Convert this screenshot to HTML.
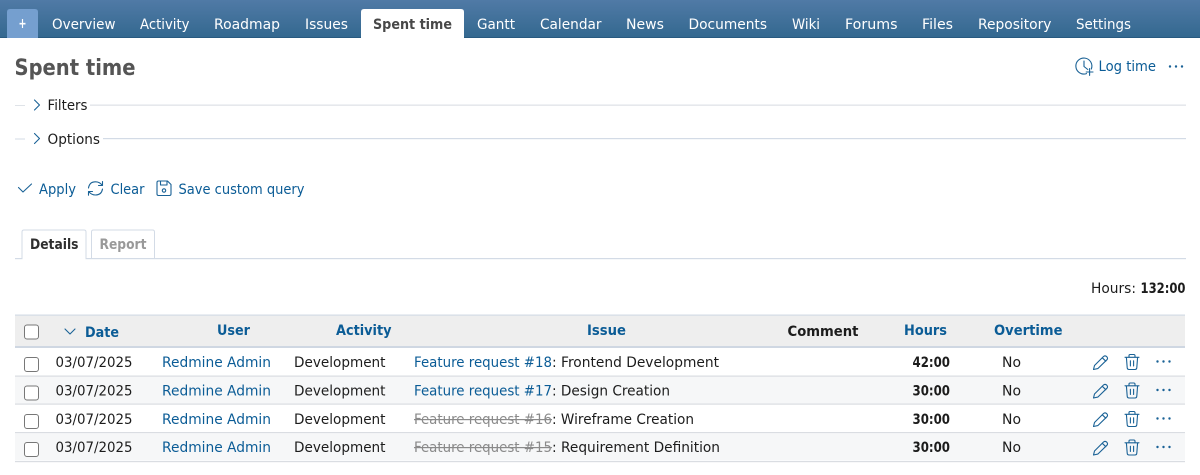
<!DOCTYPE html>
<html lang="en"><head><meta charset="utf-8"><title>Spent time</title>
<style>
html,body{margin:0;padding:0;background:#fff;width:1200px;height:475px;overflow:hidden}
svg{display:block}
text{font-family:"DejaVu Sans","Liberation Sans",Arial,sans-serif;font-size:14px;fill:#1c1c1c}
.n{fill:#fff}
.l{fill:#0b5c96}
.b{font-weight:700}
.h{fill:#0b5c96;font-weight:700}
.g{fill:#8a8a8a}
.i{fill:none;stroke:#1a6296;stroke-width:1.1;stroke-linecap:round;stroke-linejoin:round}
.c{fill:#fff;stroke:#777;stroke-width:1}
.d{fill:#1a6296}
</style></head><body>
<svg width="1200" height="475" viewBox="0 0 1200 475" xmlns="http://www.w3.org/2000/svg">
<defs>
<linearGradient id="nav" x1="0" y1="0" x2="0" y2="1"><stop offset="0" stop-color="#507aa6"/><stop offset="1" stop-color="#33688f"/></linearGradient>
<g id="pen"><path class="i" d="M1.5 15.5 L2.5 11.5 L11.5 2.5 Q13 1.2 14.7 2.6 Q16.2 4.2 15 5.7 L5.8 14.6 Z M10.3 3.8 L13.8 7.2"/></g>
<g id="bin"><path class="i" d="M1 3.8 H15 M5 3.8 V2.2 Q5 1 6.2 1 H9.8 Q11 1 11 2.2 V3.8 M2.4 3.8 L3.2 14.2 Q3.4 16 5 16 H11 Q12.6 16 12.8 14.2 L13.6 3.8 M6.4 7.3 V12.5 M9.6 7.3 V12.5"/></g>
<g id="dots"><circle class="d" cx="1.5" cy="1.5" r="1.2"/><circle class="d" cx="7.5" cy="1.5" r="1.2"/><circle class="d" cx="13.5" cy="1.5" r="1.2"/></g>
</defs>
<!-- nav -->
<rect width="1200" height="38" fill="url(#nav)"/>
<rect y="37" width="1200" height="1" fill="#285a80"/>
<path d="M7 38 V12 Q7 9 10 9 H35 Q38 9 38 12 V38 Z" fill="#759fcf"/>
<text class="n b" x="18.5" y="28" textLength="8" lengthAdjust="spacingAndGlyphs">+</text>
<path d="M361 38 V12 Q361 9 364 9 H461 Q464 9 464 12 V38 Z" fill="#fff"/>
<g>
<text class="n" x="52" y="29" textLength="63.5" lengthAdjust="spacingAndGlyphs">Overview</text>
<text class="n" x="140" y="29" textLength="49.5" lengthAdjust="spacingAndGlyphs">Activity</text>
<text class="n" x="214" y="29" textLength="66" lengthAdjust="spacingAndGlyphs">Roadmap</text>
<text class="n" x="305" y="29" textLength="43" lengthAdjust="spacingAndGlyphs">Issues</text>
<text class="b" x="373" y="29" textLength="79" lengthAdjust="spacingAndGlyphs" style="fill:#484848">Spent time</text>
<text class="n" x="477" y="29" textLength="38" lengthAdjust="spacingAndGlyphs">Gantt</text>
<text class="n" x="540" y="29" textLength="61.5" lengthAdjust="spacingAndGlyphs">Calendar</text>
<text class="n" x="626" y="29" textLength="38" lengthAdjust="spacingAndGlyphs">News</text>
<text class="n" x="688.5" y="29" textLength="78.5" lengthAdjust="spacingAndGlyphs">Documents</text>
<text class="n" x="792" y="29" textLength="28" lengthAdjust="spacingAndGlyphs">Wiki</text>
<text class="n" x="845" y="29" textLength="52.5" lengthAdjust="spacingAndGlyphs">Forums</text>
<text class="n" x="922" y="29" textLength="31" lengthAdjust="spacingAndGlyphs">Files</text>
<text class="n" x="978" y="29" textLength="73.5" lengthAdjust="spacingAndGlyphs">Repository</text>
<text class="n" x="1076" y="29" textLength="55" lengthAdjust="spacingAndGlyphs">Settings</text>
</g>
<!-- heading -->
<text class="b" x="14.5" y="75" textLength="121" lengthAdjust="spacingAndGlyphs" style="font-size:22.5px;fill:#555">Spent time</text>
<path class="i" d="M1091.3 69 A8 8 0 1 0 1086.5 73.6"/>
<path class="i" d="M1084 61 V66.5 L1087.8 69.5"/>
<path class="i" d="M1086.2 72 H1093 M1089.6 68.6 V75.4"/>
<text class="l" x="1098.5" y="71" textLength="57.5" lengthAdjust="spacingAndGlyphs">Log time</text>
<use href="#dots" x="1168.5" y="65"/>
<!-- fieldsets -->
<rect x="15" y="105" width="10" height="1" fill="#dfe3e8"/>
<rect x="90" y="104.5" width="1096" height="1.3" fill="#dfe3e8"/>
<path class="i" d="M34.5 100 L39.5 105 L34.5 110"/>
<text x="47.5" y="110" textLength="40" lengthAdjust="spacingAndGlyphs">Filters</text>
<rect x="15" y="138.5" width="10" height="1" fill="#d3dbe6"/>
<rect x="103" y="138" width="1083" height="1.2" fill="#d3dbe6"/>
<path class="i" d="M34.5 133.5 L39.5 138.5 L34.5 143.5"/>
<text x="47.5" y="144" textLength="52.5" lengthAdjust="spacingAndGlyphs">Options</text>
<!-- actions -->
<path class="i" d="M18.5 187.5 L23 192 L31.5 184"/>
<text class="l" x="39" y="194" textLength="37" lengthAdjust="spacingAndGlyphs">Apply</text>
<path class="i" d="M88.5 188 Q89.5 181.8 95.5 181.8 Q99.5 181.8 102 185 M102.5 181.5 V185.5 H98.5 M102.5 189 Q101.5 195 95.5 195 Q91.5 195 89 191.8 M88.5 195.2 V191.5 H92.5"/>
<text class="l" x="110.5" y="194" textLength="34" lengthAdjust="spacingAndGlyphs">Clear</text>
<path class="i" d="M158.5 181 H167.5 L171 184.5 V194 Q171 195.5 169.5 195.5 H158.5 Q157 195.5 157 194 V182.5 Q157 181 158.5 181 Z M160.5 181 V185 H167 V181"/>
<circle class="i" cx="164" cy="190.5" r="1.7"/>
<text class="l" x="178.5" y="194" textLength="126" lengthAdjust="spacingAndGlyphs">Save custom query</text>
<!-- tabs -->
<rect x="15" y="258" width="1171" height="1.2" fill="#d3dbe6"/>
<path d="M22 259 V232 Q22 230 24 230 H84 Q86 230 86 232 V259" fill="#fff" stroke="#d3dbe6" stroke-width="1"/>
<rect x="22.5" y="257" width="63" height="3" fill="#fff"/>
<path d="M91.5 258 V232 Q91.5 230 93.5 230 H152.5 Q154.5 230 154.5 232 V258" fill="#fff" stroke="#d3dbe6" stroke-width="1"/>
<text class="b" x="30" y="249" textLength="48.5" lengthAdjust="spacingAndGlyphs" style="fill:#2e2e2e">Details</text>
<text class="b" x="99.5" y="249" textLength="47" lengthAdjust="spacingAndGlyphs" style="fill:#999">Report</text>
<!-- hours -->
<text x="1091" y="293" textLength="45" lengthAdjust="spacingAndGlyphs">Hours:</text>
<text class="b" x="1140.5" y="293" textLength="45" lengthAdjust="spacingAndGlyphs">132:00</text>
<!-- table -->
<rect x="15" y="315" width="1170" height="32" fill="#eeeeee"/>
<rect x="15" y="314.5" width="1170" height="1.2" fill="#d3dbe6"/>
<rect x="15" y="346" width="1170" height="2" fill="#cfd7e2"/>
<rect x="15" y="376.5" width="1170" height="27" fill="#f6f7f8"/>
<rect x="15" y="433.5" width="1170" height="27" fill="#f6f7f8"/>
<rect x="15" y="375.5" width="1170" height="1.2" fill="#dadde2"/>
<rect x="15" y="403.5" width="1170" height="1.2" fill="#dadde2"/>
<rect x="15" y="432" width="1170" height="1.2" fill="#dadde2"/>
<rect x="15" y="461" width="1170" height="1.2" fill="#dadde2"/>
<rect class="c" x="24.5" y="325" width="14" height="14" rx="2.5"/>
<path class="i" d="M65 329 L70 334 L75 329"/>
<text class="h" x="85" y="337" textLength="34" lengthAdjust="spacingAndGlyphs">Date</text>
<text class="h" x="217" y="335" textLength="33" lengthAdjust="spacingAndGlyphs">User</text>
<text class="h" x="336" y="335" textLength="55.5" lengthAdjust="spacingAndGlyphs">Activity</text>
<text class="h" x="587" y="335" textLength="39" lengthAdjust="spacingAndGlyphs">Issue</text>
<text class="b" x="787.5" y="336" textLength="71" lengthAdjust="spacingAndGlyphs">Comment</text>
<text class="h" x="904" y="335" textLength="43" lengthAdjust="spacingAndGlyphs">Hours</text>
<text class="h" x="994" y="335" textLength="68.5" lengthAdjust="spacingAndGlyphs">Overtime</text>
<!-- row 1 -->
<rect class="c" x="24.5" y="357.5" width="14" height="14" rx="2.5"/>
<text x="55.5" y="367" textLength="77" lengthAdjust="spacingAndGlyphs">03/07/2025</text>
<text class="l" x="162" y="367" textLength="109" lengthAdjust="spacingAndGlyphs">Redmine Admin</text>
<text x="294" y="367" textLength="91.5" lengthAdjust="spacingAndGlyphs">Development</text>
<text class="l" x="414" y="367" textLength="138" lengthAdjust="spacingAndGlyphs">Feature request #18</text>
<text x="552" y="367" textLength="167" lengthAdjust="spacingAndGlyphs">: Frontend Development</text>
<text class="b" x="912.5" y="367" textLength="37.5" lengthAdjust="spacingAndGlyphs">42:00</text>
<text x="1002" y="367" textLength="19" lengthAdjust="spacingAndGlyphs">No</text>
<use href="#pen" x="1092" y="354"/><use href="#bin" x="1124" y="353.5"/><use href="#dots" x="1156" y="360"/>
<!-- row 2 -->
<rect class="c" x="24.5" y="386" width="14" height="14" rx="2.5"/>
<text x="55.5" y="395.5" textLength="77" lengthAdjust="spacingAndGlyphs">03/07/2025</text>
<text class="l" x="162" y="395.5" textLength="109" lengthAdjust="spacingAndGlyphs">Redmine Admin</text>
<text x="294" y="395.5" textLength="91.5" lengthAdjust="spacingAndGlyphs">Development</text>
<text class="l" x="414" y="395.5" textLength="138" lengthAdjust="spacingAndGlyphs">Feature request #17</text>
<text x="552" y="395.5" textLength="118" lengthAdjust="spacingAndGlyphs">: Design Creation</text>
<text class="b" x="912.5" y="395.5" textLength="37.5" lengthAdjust="spacingAndGlyphs">30:00</text>
<text x="1002" y="395.5" textLength="19" lengthAdjust="spacingAndGlyphs">No</text>
<use href="#pen" x="1092" y="382.5"/><use href="#bin" x="1124" y="382"/><use href="#dots" x="1156" y="388.5"/>
<!-- row 3 -->
<rect class="c" x="24.5" y="414.5" width="14" height="14" rx="2.5"/>
<text x="55.5" y="424" textLength="77" lengthAdjust="spacingAndGlyphs">03/07/2025</text>
<text class="l" x="162" y="424" textLength="109" lengthAdjust="spacingAndGlyphs">Redmine Admin</text>
<text x="294" y="424" textLength="91.5" lengthAdjust="spacingAndGlyphs">Development</text>
<text class="g" x="414" y="424" textLength="138" lengthAdjust="spacingAndGlyphs">Feature request #16</text>
<rect x="414" y="419" width="138" height="1.2" fill="#8a8a8a"/>
<text x="552" y="424" textLength="142" lengthAdjust="spacingAndGlyphs">: Wireframe Creation</text>
<text class="b" x="912.5" y="424" textLength="37.5" lengthAdjust="spacingAndGlyphs">30:00</text>
<text x="1002" y="424" textLength="19" lengthAdjust="spacingAndGlyphs">No</text>
<use href="#pen" x="1092" y="411"/><use href="#bin" x="1124" y="410.5"/><use href="#dots" x="1156" y="417"/>
<!-- row 4 -->
<rect class="c" x="24.5" y="442.5" width="14" height="14" rx="2.5"/>
<text x="55.5" y="452" textLength="77" lengthAdjust="spacingAndGlyphs">03/07/2025</text>
<text class="l" x="162" y="452" textLength="109" lengthAdjust="spacingAndGlyphs">Redmine Admin</text>
<text x="294" y="452" textLength="91.5" lengthAdjust="spacingAndGlyphs">Development</text>
<text class="g" x="414" y="452" textLength="138" lengthAdjust="spacingAndGlyphs">Feature request #15</text>
<rect x="414" y="447" width="138" height="1.2" fill="#8a8a8a"/>
<text x="552" y="452" textLength="168" lengthAdjust="spacingAndGlyphs">: Requirement Definition</text>
<text class="b" x="912.5" y="452" textLength="37.5" lengthAdjust="spacingAndGlyphs">30:00</text>
<text x="1002" y="452" textLength="19" lengthAdjust="spacingAndGlyphs">No</text>
<use href="#pen" x="1092" y="439.5"/><use href="#bin" x="1124" y="439"/><use href="#dots" x="1156" y="445.5"/>
</svg>
</body></html>
